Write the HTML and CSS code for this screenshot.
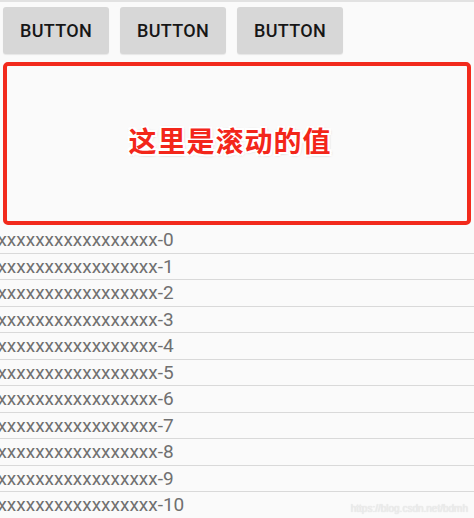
FILE: index.html
```html
<!DOCTYPE html>
<html>
<head>
<meta charset="utf-8">
<link rel="stylesheet" href="styles.css">
</head>
<body>
<div class="topbar"></div>
<div class="buttons">
  <div class="btn">BUTTON</div>
  <div class="btn">BUTTON</div>
  <div class="btn">BUTTON</div>
</div>
<div class="box"><span class="boxtext">这里是滚动的值</span></div>
<div class="list">
  <div class="row"><span class="item">xxxxxxxxxxxxxxxxxx-0</span></div>
  <div class="row"><span class="item">xxxxxxxxxxxxxxxxxx-1</span></div>
  <div class="row"><span class="item">xxxxxxxxxxxxxxxxxx-2</span></div>
  <div class="row"><span class="item">xxxxxxxxxxxxxxxxxx-3</span></div>
  <div class="row"><span class="item">xxxxxxxxxxxxxxxxxx-4</span></div>
  <div class="row"><span class="item">xxxxxxxxxxxxxxxxxx-5</span></div>
  <div class="row"><span class="item">xxxxxxxxxxxxxxxxxx-6</span></div>
  <div class="row"><span class="item">xxxxxxxxxxxxxxxxxx-7</span></div>
  <div class="row"><span class="item">xxxxxxxxxxxxxxxxxx-8</span></div>
  <div class="row"><span class="item">xxxxxxxxxxxxxxxxxx-9</span></div>
  <div class="row"><span class="item">xxxxxxxxxxxxxxxxxx-10</span></div>
</div>
<div class="watermark">https://blog.csdn.net/bdmh</div>
</body>
</html>
```
FILE: styles.css
```css
html, body {
  margin: 0;
  padding: 0;
  background: #fafafa;
  width: 474px;
  height: 518px;
  overflow: hidden;
  font-family: Roboto, "Noto Sans CJK SC", sans-serif;
  position: relative;
}
.topbar {
  height: 2px;
  background: #e2e2e2;
}
.buttons {
  display: flex;
  gap: 11px;
  padding: 5px 0 0 3px;
}
.btn {
  width: 106px;
  height: 47px;
  box-sizing: border-box;
  background: #d7d7d7;
  border-radius: 3px;
  display: flex;
  align-items: center;
  justify-content: center;
  font-size: 18px;
  font-weight: 500;
  color: #161616;
  letter-spacing: 0.3px;
  box-shadow: 0 1px 1px rgba(0,0,0,0.08);
}
.box {
  margin: 8px 0 0 3px;
  width: 468px;
  height: 163px;
  box-sizing: border-box;
  border: 4px solid #f22a1c;
  border-radius: 5px;
  display: flex;
  align-items: center;
  justify-content: center;
  padding-right: 14px;
  padding-bottom: 8px;
}
.boxtext {
  font-family: "Noto Sans CJK SC", sans-serif;
  font-size: 28px;
  font-weight: 700;
  color: #f3261a;
  letter-spacing: 1px;
  text-shadow:
    1px 0 0 #fff, -1px 0 0 #fff, 0 1px 0 #fff, 0 -1px 0 #fff,
    2px 0 0 #fff, -2px 0 0 #fff, 0 2px 0 #fff, 0 -2px 0 #fff,
    2px 2px 0 #fff, -2px -2px 0 #fff, 2px -2px 0 #fff, -2px 2px 0 #fff,
    0 0 3px #999, 1px 1px 3px #aaa;
}
.list {
  margin-top: 2px;
}
.row {
  height: 26.5px;
  box-sizing: border-box;
  border-bottom: 1.5px solid #d9d9d9;
  display: flex;
  align-items: center;
  overflow: hidden;
}
.item {
  margin-left: -12px;
  font-size: 19px;
  color: #707070;
  white-space: nowrap;
}
.watermark {
  position: absolute;
  right: 6px;
  bottom: 4px;
  font-family: "Liberation Sans", sans-serif;
  font-size: 10px;
  color: #eeeeee;
  text-shadow: 0 0 1px #cfcfcf;
}
```
